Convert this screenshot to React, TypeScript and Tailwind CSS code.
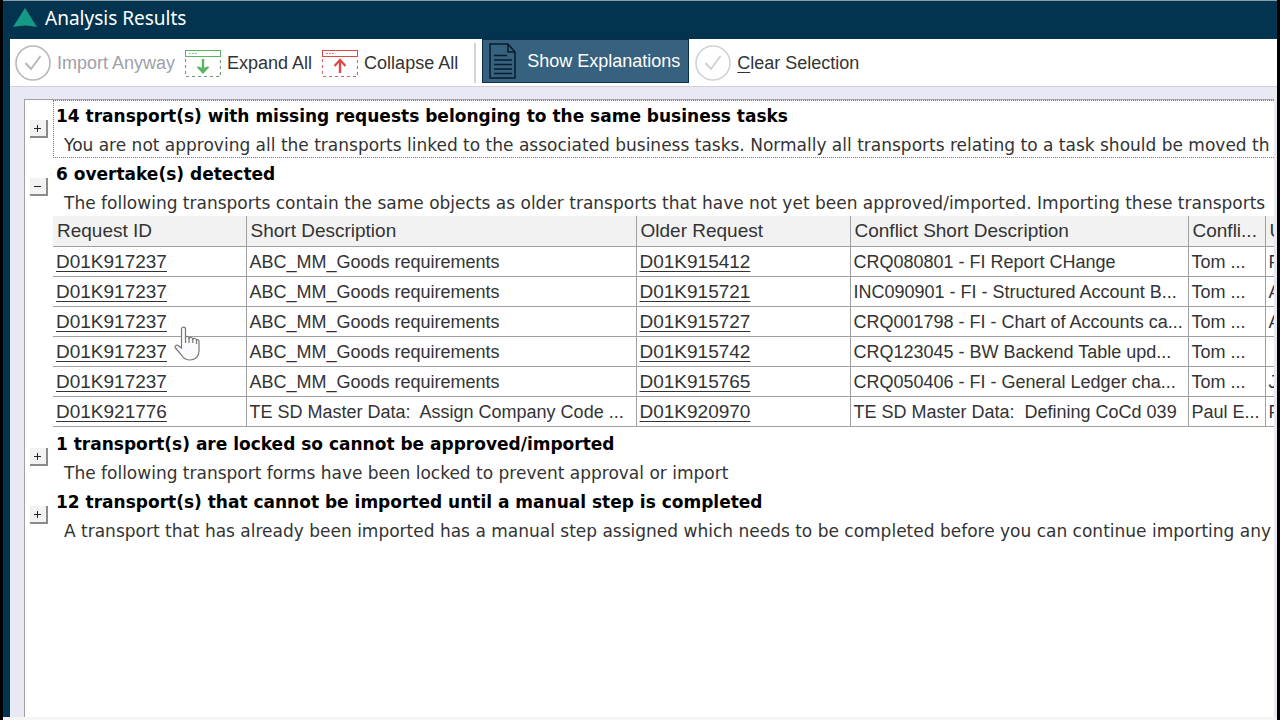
import React, { useState } from 'react';

type Conflict = {
  request: string;
  description: string;
  older: string;
  conflict: string;
  owner: string;
  status: string;
};

const conflicts: Conflict[] = [
  { request: 'D01K917237', description: 'ABC_MM_Goods requirements', older: 'D01K915412', conflict: 'CRQ080801 - FI Report CHange', owner: 'Tom ...', status: 'F' },
  { request: 'D01K917237', description: 'ABC_MM_Goods requirements', older: 'D01K915721', conflict: 'INC090901 - FI - Structured Account B...', owner: 'Tom ...', status: 'A' },
  { request: 'D01K917237', description: 'ABC_MM_Goods requirements', older: 'D01K915727', conflict: 'CRQ001798 - FI - Chart of Accounts ca...', owner: 'Tom ...', status: 'A' },
  { request: 'D01K917237', description: 'ABC_MM_Goods requirements', older: 'D01K915742', conflict: 'CRQ123045 - BW Backend Table upd...', owner: 'Tom ...', status: '' },
  { request: 'D01K917237', description: 'ABC_MM_Goods requirements', older: 'D01K915765', conflict: 'CRQ050406 - FI - General Ledger cha...', owner: 'Tom ...', status: 'J' },
  { request: 'D01K921776', description: 'TE SD Master Data:  Assign Company Code ...', older: 'D01K920970', conflict: 'TE SD Master Data:  Defining CoCd 039', owner: 'Paul E...', status: 'F' },
];

const columns = ['Request ID', 'Short Description', 'Older Request', 'Conflict Short Description', 'Confli...', 'U'];

const sections = [
  {
    id: 'missing',
    title: '14 transport(s) with missing requests belonging to the same business tasks',
    text: 'You are not approving all the transports linked to the associated business tasks. Normally all transports relating to a task should be moved th',
  },
  {
    id: 'overtake',
    title: '6 overtake(s) detected',
    text: 'The following transports contain the same objects as older transports that have not yet been approved/imported. Importing these transports',
  },
  {
    id: 'locked',
    title: '1 transport(s) are locked so cannot be approved/imported',
    text: 'The following transport forms have been locked to prevent approval or import',
  },
  {
    id: 'manual',
    title: '12 transport(s) that cannot be imported until a manual step is completed',
    text: 'A transport that has already been imported has a manual step assigned which needs to be completed before you can continue importing any',
  },
];

function CheckCircle({ color }: { color: string }) {
  return (
    <svg className="h-9 w-9 shrink-0" viewBox="0 0 36 36" fill="none" stroke={color}>
      <circle cx="18" cy="18" r="17" strokeWidth="1.6" />
      <path d="M10.5 18l5.500 6L25.500 11" strokeWidth="2" />
    </svg>
  );
}

function PanelIcon({ color, up }: { color: string; up?: boolean }) {
  return (
    <svg className="h-7 w-9 shrink-0" viewBox="0 0 36 28" fill="none" stroke={color}>
      <rect x="0.5" y="1.5" width="35" height="6" />
      <path d="M4 4.5h8" strokeDasharray="2 1" opacity="0.7" />
      <path d="M0.5 10v17.5h35V10" strokeDasharray="3 3" strokeWidth="1.2" stroke={up ? '#d06a6a' : '#6f9a72'} />
      {up ? (
        <>
          <path d="M18 24V12" strokeWidth="2.4" />
          <path d="M12.5 17l5.5-6 5.5 6" strokeWidth="2.2" />
        </>
      ) : (
        <>
          <path d="M18 10v13" strokeWidth="2.4" />
          <path d="M12.5 18l5.5 6 5.5-6-5.500 2z" fill={color} strokeWidth="1.4" />
        </>
      )}
    </svg>
  );
}

function DocumentIcon() {
  return (
    <svg className="h-9 w-7 shrink-0" viewBox="0 0 28 36" fill="none" stroke="#071c2c" strokeWidth="1.5">
      <path d="M1 1h18l7 8v26H1z" />
      <path d="M19 1v8h7" />
      <path d="M5 12.5h13M5 17h18M5 21.5h18M5 26h18M5 30.5h18" />
    </svg>
  );
}

function HandCursor() {
  return (
    <svg className="absolute top-[110px] left-[120px] h-9 w-7" viewBox="0 0 28 36" fill="#fbfbfd" stroke="#777777" strokeWidth="1.2">
      <path d="M8.5 22V3c0-2.500 4-2.500 4 0v8c1-1 3.500-.6 3.500 1 1-1 3.500-.6 3.800 1 1-1 3.500-.6 3.700 1 1-.8 2.500 0 2.500 1.500V25c0 5-3.500 9-9 9-4 0-6.500-1.500-8.500-5l-6-7c-1.500-2 1-3.500 2.500-2.500z" />
      <path d="M12.5 11v6M16 12v5M19.800 13v4M23.500 14v4" fill="none" />
    </svg>
  );
}

function ConflictTable() {
  return (
    <div className="relative mb-px">
      <table className="w-[1400px] table-fixed border-collapse text-left font-['Liberation_Sans',Arial,sans-serif] leading-6 text-[#333333]">
        <colgroup>
          <col className="w-[193px]" />
          <col className="w-[390px]" />
          <col className="w-[214px]" />
          <col className="w-[338px]" />
          <col className="w-[77px]" />
          <col />
        </colgroup>
        <thead>
          <tr className="h-[30px] bg-[#f2f2f2]">
            {columns.map((name) => (
              <th key={name} className="border-r border-b border-[#a0a0a0] px-1 py-0 text-[19px] font-normal whitespace-nowrap">
                {name}
              </th>
            ))}
          </tr>
        </thead>
        <tbody>
          {conflicts.map((row) => (
            <tr
              key={row.older}
              className="h-[30px] text-lg leading-6 [&_a]:text-[19px] [&>td]:border-r [&>td]:border-b [&>td]:border-[#a0a0a0] [&>td]:px-[3px] [&>td]:pt-px [&>td]:pb-0 [&>td]:whitespace-pre"
            >
              <td>
                <a href="#request" className="underline decoration-1 underline-offset-3">{row.request}</a>
              </td>
              <td>{row.description}</td>
              <td>
                <a href="#older" className="underline decoration-1 underline-offset-3">{row.older}</a>
              </td>
              <td>{row.conflict}</td>
              <td>{row.owner}</td>
              <td>{row.status}</td>
            </tr>
          ))}
        </tbody>
      </table>
      <HandCursor />
    </div>
  );
}

export default function App() {
  const [open, setOpen] = useState<string[]>(['overtake']);
  const [explain, setExplain] = useState(true);

  const toggle = (id: string) =>
    setOpen(open.includes(id) ? open.filter((item) => item !== id) : [...open, id]);

  return (
    <div className="h-screen overflow-hidden bg-black px-[3px] font-['Liberation_Sans',Arial,sans-serif]">
      <div className="flex h-full flex-col border-t border-b-3 border-t-[#8c9aa6] border-b-[#f5f5f5] bg-[#03344f]">
        <header className="flex h-[38px] shrink-0 items-center gap-2 pr-4 pb-1 pl-2.5">
          <svg className="h-5 w-6" viewBox="0 0 24 20">
            <path d="M12 0L24 19Q12 16 0 19z" fill="#159a86" />
          </svg>
          <h1 className="font-['Noto_Sans',sans-serif] text-[19px] text-white">Analysis Results</h1>
        </header>

        <main className="ml-[7px] flex min-h-0 flex-1 flex-col bg-[#e9e9f3]">
          <div className="flex h-12 shrink-0 items-center border-b border-[#cfcfd4] bg-white pl-[5px] text-lg whitespace-nowrap text-[#333333]">
            <button type="button" disabled className="flex items-center gap-1.5 text-[#a0a0a8]">
              <CheckCircle color="#b8b8b8" />
              Import Anyway
            </button>
            <button type="button" className="ml-2.5 flex items-center gap-1.5" onClick={() => setOpen(sections.map((s) => s.id))}>
              <PanelIcon color="#5cb360" />
              Expand All
            </button>
            <button type="button" className="ml-2.5 flex items-center gap-1.5" onClick={() => setOpen([])}>
              <PanelIcon color="#e04848" up />
              Collapse All
            </button>
            <div className="ml-4 h-10 w-0.5 bg-[#d4d4d4]" />
            <button
              type="button"
              aria-pressed={explain}
              className="ml-1.5 mb-1 flex h-11 items-center gap-2.5 border border-[#0c2c48] bg-[#36617f] pr-2 pl-1.5 text-white"
              onClick={() => setExplain(!explain)}
            >
              <DocumentIcon />
              Show Explanations
            </button>
            <button type="button" className="ml-1.5 flex items-center gap-1.5">
              <CheckCircle color="#d2d2d2" />
              <span><span className="underline underline-offset-3">C</span>lear Selection</span>
            </button>
          </div>

          <div className="mt-3 mr-[3px] ml-[14px] min-h-0 flex-1 overflow-hidden border-t border-l border-[#a0a0a8] bg-white">
            {sections.map((section, index) => (
              <section key={section.id} className="flex">
                <div className="w-7 shrink-0 pt-5 pl-[5px]">
                  <button
                    type="button"
                    aria-label={section.title}
                    aria-expanded={open.includes(section.id)}
                    className="flex h-[18px] w-[18px] items-center justify-center border-r-2 border-b-2 border-[#8a8a8a] bg-[#f3f3f3] text-[#222222]"
                    onClick={() => toggle(section.id)}
                  >
                    <svg className="h-2 w-2" viewBox="0 0 8 8" stroke="currentColor">
                      <path d={open.includes(section.id) ? 'M0 4.5h7' : 'M0 4.5h7M3.5 1v7'} />
                    </svg>
                  </button>
                </div>
                <div className="min-w-0 flex-1 whitespace-nowrap">
                  <div className={index === 0 ? 'h-[58px] border border-r-0 border-dotted border-[#777777]' : 'h-[58px] border border-r-0 border-transparent'}>
                    <h2 className="pl-0.5 font-['DejaVu_Sans',Verdana,sans-serif] text-[17px] leading-[30px] font-bold text-black">{section.title}</h2>
                    {explain && (
                      <p className="pl-2.5 font-['DejaVu_Sans',Verdana,sans-serif] text-[17px] leading-7 text-[#333333]">{section.text}</p>
                    )}
                  </div>
                  {section.id === 'overtake' && open.includes('overtake') && <ConflictTable />}
                </div>
              </section>
            ))}
          </div>
        </main>
      </div>
    </div>
  );
}
